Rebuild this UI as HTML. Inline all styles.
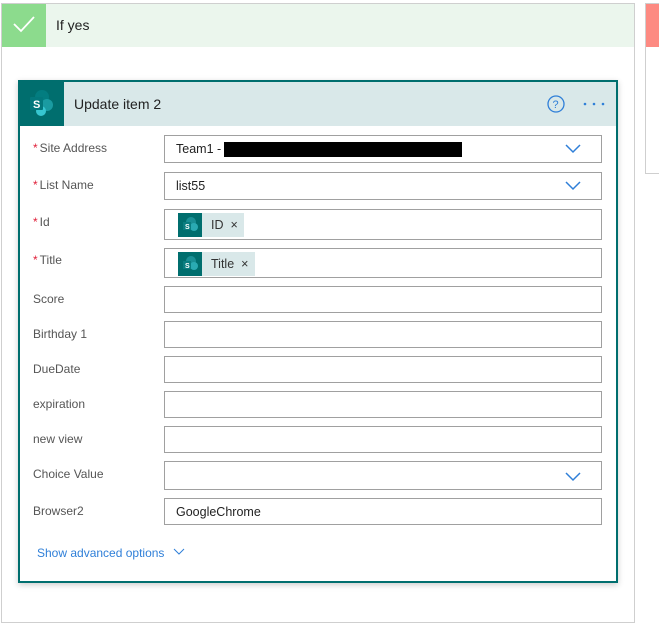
<!DOCTYPE html>
<html><head><style>
*{box-sizing:border-box;margin:0;padding:0}
body{width:659px;height:612px;background:#fff;font-family:"Segoe UI","Liberation Sans",sans-serif;position:relative;overflow:hidden}
.abs{position:absolute}
.lbl{position:absolute;left:33px;font-size:12px;color:#555}
.lbl b{color:#e0203a;font-weight:normal;margin-right:2px}
.inp{position:absolute;left:164px;width:438px;border:1px solid #a0a0a0;background:#fff;font-size:12.5px;color:#222}
.inp span.t{position:absolute;left:11px;top:6px}
.chev{position:absolute;right:20px;top:8px}
.tok{position:absolute;left:13px;top:3px;height:24px;background:#d9e8e9;font-size:12.5px;color:#333;display:flex;align-items:center}
.tok .ic{width:24px;height:24px;background:#006e6e;margin-right:9px;position:relative}
</style></head><body>
<div class="abs" style="left:1px;top:3px;width:634px;height:620px;border:1px solid #cfcfcf"></div>
<div class="abs" style="left:2px;top:4px;width:632px;height:43px;background:#ebf6ed"></div>
<div class="abs" style="left:2px;top:4px;width:44px;height:43px;background:#8cdb8d"></div>
<svg class="abs" style="left:12px;top:14px" width="24" height="20"><path d="M2 10 L9 17 L22 3" fill="none" stroke="#fff" stroke-width="1.8"/></svg>
<div class="abs" style="left:56px;top:17px;font-size:14px;color:#222">If yes</div>
<div class="abs" style="left:645px;top:3px;width:20px;height:171px;border:1px solid #cfcfcf"></div>
<div class="abs" style="left:646px;top:4px;width:20px;height:43px;background:#fd8a82"></div>

<div class="abs" style="left:18px;top:80px;width:600px;height:503px;border:2px solid #006e6e;box-shadow:0 2px 6px rgba(0,0,0,.2);background:#fff"></div>
<div class="abs" style="left:20px;top:82px;width:596px;height:44px;background:#d9e8e9"></div>
<div class="abs" style="left:20px;top:82px;width:44px;height:44px;background:#006e6e"></div>
<svg class="abs" style="left:26px;top:88px" width="32" height="32"><circle cx="16" cy="9" r="7" fill="#037d80"/><circle cx="21" cy="17" r="6" fill="#1a9ba1"/><circle cx="15" cy="23" r="5" fill="#37c6d0"/><rect x="4" y="9" width="13" height="13" rx="1" fill="#03787c"/><text x="7" y="20" font-size="11" font-weight="bold" fill="#fff" font-family="Liberation Sans">S</text></svg>
<div class="abs" style="left:74px;top:96px;font-size:14px;color:#222">Update item 2</div>
<svg class="abs" style="left:546px;top:94px" width="20" height="20"><circle cx="10" cy="10" r="8" fill="none" stroke="#2f7fd8" stroke-width="1.3"/><text x="6.5" y="14" font-size="11" fill="#2f7fd8" font-family="Liberation Sans">?</text></svg>
<svg class="abs" style="left:583px;top:102px" width="22" height="4"><circle cx="2" cy="2" r="1.3" fill="#2f7fd8"/><circle cx="11" cy="2" r="1.3" fill="#2f7fd8"/><circle cx="20" cy="2" r="1.3" fill="#2f7fd8"/></svg>

<div class="lbl" style="top:141px"><b>*</b>Site Address</div>
<div class="inp" style="top:135px;height:28px"><span class="t">Team1 -</span><div class="abs" style="left:59px;top:6px;width:238px;height:15px;background:#000"></div><svg class="chev" width="16" height="10"><path d="M1 1 L8 8 L15 1" fill="none" stroke="#2f7fd8" stroke-width="1.5"/></svg></div>
<div class="lbl" style="top:178px"><b>*</b>List Name</div>
<div class="inp" style="top:172px;height:28px"><span class="t">list55</span><svg class="chev" width="16" height="10"><path d="M1 1 L8 8 L15 1" fill="none" stroke="#2f7fd8" stroke-width="1.5"/></svg></div>
<div class="lbl" style="top:215px"><b>*</b>Id</div>
<div class="inp" style="top:209px;height:31px"><div class="tok" style="width:66px"><div class="ic"><svg width="24" height="24"><circle cx="13" cy="9" r="5" fill="#1a8f95"/><circle cx="16" cy="14" r="4" fill="#2aaab2"/><rect x="5" y="9" width="8" height="8" fill="#0a7d80"/><text x="7" y="16" font-size="7" font-weight="bold" fill="#fff" font-family="Liberation Sans">S</text></svg></div>ID&nbsp;&nbsp;×</div></div>
<div class="lbl" style="top:253px"><b>*</b>Title</div>
<div class="inp" style="top:248px;height:30px"><div class="tok" style="width:77px"><div class="ic"><svg width="24" height="24"><circle cx="13" cy="9" r="5" fill="#1a8f95"/><circle cx="16" cy="14" r="4" fill="#2aaab2"/><rect x="5" y="9" width="8" height="8" fill="#0a7d80"/><text x="7" y="16" font-size="7" font-weight="bold" fill="#fff" font-family="Liberation Sans">S</text></svg></div>Title&nbsp;&nbsp;×</div></div>
<div class="lbl" style="top:292px">Score</div>
<div class="inp" style="top:286px;height:27px"></div>
<div class="lbl" style="top:327px">Birthday 1</div>
<div class="inp" style="top:321px;height:27px"></div>
<div class="lbl" style="top:362px">DueDate</div>
<div class="inp" style="top:356px;height:27px"></div>
<div class="lbl" style="top:397px">expiration</div>
<div class="inp" style="top:391px;height:27px"></div>
<div class="lbl" style="top:432px">new view</div>
<div class="inp" style="top:426px;height:27px"></div>
<div class="lbl" style="top:467px">Choice Value</div>
<div class="inp" style="top:461px;height:29px"><svg class="chev" width="16" height="10" style="top:10px"><path d="M1 1 L8 8 L15 1" fill="none" stroke="#2f7fd8" stroke-width="1.5"/></svg></div>
<div class="lbl" style="top:504px">Browser2</div>
<div class="inp" style="top:498px;height:27px"><span class="t">GoogleChrome</span></div>
<div class="abs" style="left:37px;top:546px;font-size:12px;color:#2f7fd8">Show advanced options</div>
<svg class="abs" style="left:173px;top:548px" width="12" height="8"><path d="M1 1 L6 6 L11 1" fill="none" stroke="#2f7fd8" stroke-width="1"/></svg>
</body></html>
